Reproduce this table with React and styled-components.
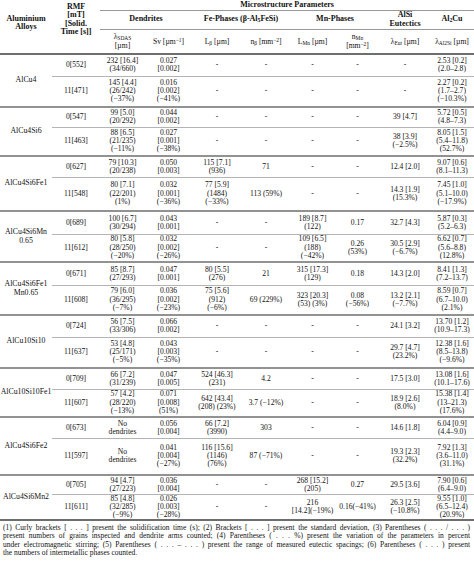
import styled, { createGlobalStyle } from "styled-components";

const GlobalStyle = createGlobalStyle`
  body {
    margin: 0;
    background: #fff;
  }
`;

const Page = styled.div`
  width: 474px;
  font-family: "Liberation Serif", "Times New Roman", serif;
  color: #111;
`;

const Table = styled.table`
  width: 474px;
  table-layout: fixed;
  border-collapse: collapse;
`;

const Tr = styled.tr`
  height: ${(p) => p.$h}px;
`;

const Th = styled.th`
  padding: ${(p) => p.$top || 0}px 0 0 0;
  vertical-align: ${(p) => (p.$top ? "top" : "middle")};
  text-align: center;
  font-size: ${(p) => (p.$bold ? "8px" : "7.6px")};
  font-weight: ${(p) => (p.$bold ? 700 : 400)};
  line-height: ${(p) => (p.$bold ? "8.4px" : "9.4px")};
  white-space: nowrap;
  border-bottom: ${(p) =>
    p.$bottom ? "2px solid #6e6e6e" : p.$rule ? "1px solid #999" : "none"};
`;

const lines = {
  inner: "1px solid #b4b4b4",
  group: "2px solid #929292",
  end: "2px solid #6e6e6e",
};

const Td = styled.td`
  padding: 0;
  vertical-align: middle;
  text-align: center;
  font-size: 7.6px;
  line-height: 8.2px;
  white-space: pre;
  border-bottom: ${(p) => lines[p.$line] || "none"};
`;

const AlloyCell = styled(Td)`
  font-size: 7.8px;
  line-height: 8.8px;
`;

const Sub = styled.sub`
  font-size: 72%;
  line-height: 0;
  vertical-align: -0.25em;
`;

const Sup = styled.sup`
  font-size: 72%;
  line-height: 0;
  vertical-align: 0.4em;
`;

const Caption = styled.div`
  padding: 3px 4px 0 3px;
  font-size: 7.5px;
  line-height: 8.3px;
`;

const CapLine = styled.div`
  text-align: justify;
  text-align-last: ${(p) => (p.$last ? "left" : "justify")};
  white-space: nowrap;
`;

const cols = [52, 48, 45, 47, 50, 48, 45, 45, 50, 44];

const groups = [
  {
    alloy: "AlCu4",
    rows: [
      { h: 22, rmf: "0[552]", c: ["232 [16.4]\n(34/660)", "0.027\n[0.002]", "-", "-", "-", "-", "-", "2.53 [0.2]\n(2.0–2.8)"] },
      { h: 31, rmf: "11[471]", c: ["145 [4.4]\n(26/242)\n(−37%)", "0.016\n[0.002]\n(−41%)", "-", "-", "-", "-", "-", "2.27 [0.2]\n(1.7–2.7)\n(−10.3%)"] },
    ],
  },
  {
    alloy: "AlCu4Si6",
    rows: [
      { h: 20, rmf: "0[547]", c: ["99 [5.0]\n(20/292)", "0.044\n[0.002]", "-", "-", "-", "-", "39 [4.7]", "5.72 [0.5]\n(4.8–7.3)"] },
      { h: 29, rmf: "11[463]", c: ["88 [6.5]\n(21/235)\n(−11%)", "0.027\n[0.001]\n(−38%)", "-", "-", "-", "-", "38 [3.9]\n(−2.5%)", "8.05 [1.5]\n(5.4–11.8)\n(52.7%)"] },
    ],
  },
  {
    alloy: "AlCu4Si6Fe1",
    rows: [
      { h: 21, rmf: "0[627]", c: ["79 [10.3]\n(20/238)", "0.050\n[0.003]", "115 [7.1]\n(936)", "71", "-", "-", "12.4 [2.0]", "9.07 [0.6]\n(8.1–11.3)"] },
      { h: 34, rmf: "11[548]", c: ["80 [7.1]\n(22/201)\n(1%)", "0.032\n[0.001]\n(−36%)", "77 [5.9]\n(1484)\n(−33%)", "113 (59%)", "-", "-", "14.3 [1.9]\n(15.3%)", "7.45 [1.0]\n(5.1–10.0)\n(−17.9%)"] },
    ],
  },
  {
    alloy: "AlCu4Si6Mn\n0.65",
    rows: [
      { h: 23, rmf: "0[689]", c: ["100 [6.7]\n(30/294)", "0.043\n[0.001]", "-", "-", "189 [8.7]\n(122)", "0.17", "32.7 [4.3]", "5.87 [0.3]\n(5.2–6.3)"] },
      { h: 28, rmf: "11[612]", c: ["80 [5.8]\n(28/250)\n(−20%)", "0.032\n[0.002]\n(−26%)", "-", "-", "109 [6.5]\n(188)\n(−42%)", "0.26\n(53%)", "30.5 [2.9]\n(−6.7%)", "6.62 [0.7]\n(5.6–8.8)\n(12.8%)"] },
    ],
  },
  {
    alloy: "AlCu4Si6Fe1\nMn0.65",
    rows: [
      { h: 23, rmf: "0[671]", c: ["85 [8.7]\n(27/293)", "0.047\n[0.001]", "80 [5.5]\n(276)", "21", "315 [17.3]\n(129)", "0.18", "14.3 [2.0]", "8.41 [1.3]\n(7.2–13.7)"] },
      { h: 30, rmf: "11[608]", c: ["79 [6.0]\n(36/295)\n(−7%)", "0.036\n[0.002]\n(−23%)", "75 [5.6]\n(912)\n(−6%)", "69 (229%)", "323 [20.3]\n(53) (3%)", "0.08\n(−56%)", "13.2 [2.1]\n(−7.7%)", "8.59 [0.7]\n(6.7–10.0)\n(2.1%)"] },
    ],
  },
  {
    alloy: "AlCu10Si10",
    rows: [
      { h: 22, rmf: "0[724]", c: ["56 [7.5]\n(33/306)", "0.066\n[0.002]", "-", "-", "-", "-", "24.1 [3.2]", "13.70 [1.2]\n(10.9–17.3)"] },
      { h: 31, rmf: "11[637]", c: ["53 [4.8]\n(25/171)\n(−5%)", "0.043\n[0.003]\n(−35%)", "-", "-", "-", "-", "29.7 [4.7]\n(23.2%)", "12.38 [1.6]\n(8.5–13.8)\n(−9.6%)"] },
    ],
  },
  {
    alloy: "AlCu10Si10Fe1",
    rows: [
      { h: 21, rmf: "0[709]", c: ["66 [7.2]\n(31/239)", "0.047\n[0.005]", "524 [46.3]\n(231)", "4.2", "-", "-", "17.5 [3.0]", "13.08 [1.6]\n(10.1–17.6)"] },
      { h: 28, rmf: "11[607]", c: ["57 [4.2]\n(28/220)\n(−13%)", "0.071\n[0.008]\n(51%)", "642 [43.4]\n(208) (23%)", "3.7 (−12%)", "-", "-", "18.9 [2.6]\n(8.0%)", "15.38 [1.4]\n(13–21.3)\n(17.6%)"] },
    ],
  },
  {
    alloy: "AlCu4Si6Fe2",
    rows: [
      { h: 21, rmf: "0[673]", c: ["No\ndendrites", "0.056\n[0.004]", "66 [7.2]\n(3990)", "303", "-", "-", "14.6 [1.8]", "6.04 [0.9]\n(4.4–9.0)"] },
      { h: 37, rmf: "11[597]", c: ["No\ndendrites", "0.041\n[0.004]\n(−27%)", "116 [15.6]\n(1146)\n(76%)", "87 (−71%)", "-", "-", "19.3 [2.3]\n(32.2%)", "7.92 [1.3]\n(3.6–11.0)\n(31.1%)"] },
    ],
  },
  {
    alloy: "AlCu4Si6Mn2",
    rows: [
      { h: 19, rmf: "0[705]", c: ["94 [4.7]\n(27/223)", "0.036\n[0.004]", "-", "-", "268 [15.2]\n(205)", "0.27", "29.5 [3.6]", "7.90 [0.6]\n(6.4–9.0)"] },
      { h: 26, rmf: "11[611]", c: ["85 [4.8]\n(32/285)\n(−9%)", "0.026\n[0.003]\n(−28%)", "-", "-", "216\n[14.2](−19%)", "0.16(−41%)", "26.3 [2.5]\n(−10.8%)", "9.55 [1.0]\n(6.5–12.4)\n(20.9%)"] },
    ],
  },
];

const caption = [
  "(1) Curly brackets [ . . . ] present the solidification time (s); (2) Brackets [ . . . ] present the standard deviation, (3) Parentheses ( . . . / . . . )",
  "present numbers of grains inspected and dendrite arms counted; (4) Parentheses ( . . . %) present the variation of the parameters in percent",
  "under electromagnetic stirring; (5) Parentheses ( . . . – . . . ) present the range of measured eutectic spacings; (6) Parentheses ( . . . ) present",
  "the numbers of intermetallic phases counted.",
];

const App = () => {
  return (
    <Page>
      <GlobalStyle />
      <Table>
        <colgroup>
          {cols.map((w, i) => (
            <col key={i} style={{ width: w }} />
          ))}
        </colgroup>
        <thead>
          <Tr $h={10}>
            <Th rowSpan={3} $bold $top={15} $bottom>
              Aluminium
              <br />
              Alloys
            </Th>
            <Th rowSpan={3} $bold $top={3} $bottom>
              RMF
              <br />
              [mT]
              <br />
              [Solid.
              <br />
              Time [s]]
            </Th>
            <Th colSpan={8} $bold $rule>
              Microstructure Parameters
            </Th>
          </Tr>
          <Tr $h={19}>
            <Th colSpan={2} $bold $rule>Dendrites</Th>
            <Th colSpan={2} $bold $rule>
              Fe-Phases (β-Al<Sub>5</Sub>FeSi)
            </Th>
            <Th colSpan={2} $bold $rule>Mn-Phases</Th>
            <Th $bold $rule>
              AlSi
              <br />
              Eutectics
            </Th>
            <Th $bold $rule>
              Al<Sub>2</Sub>Cu
            </Th>
          </Tr>
          <Tr $h={25}>
            <Th $bottom>
              λ<Sub>SDAS</Sub>
              <br />
              [µm]
            </Th>
            <Th $bottom>
              Sv [µm<Sup>−1</Sup>]
            </Th>
            <Th $bottom>
              L<Sub>β</Sub> [µm]
            </Th>
            <Th $bottom>
              n<Sub>β</Sub> [mm<Sup>−2</Sup>]
            </Th>
            <Th $bottom>
              L<Sub>Mn</Sub> [µm]
            </Th>
            <Th $bottom>
              n<Sub>Mn</Sub>
              <br />
              [mm<Sup>−2</Sup>]
            </Th>
            <Th $bottom>
              λ<Sub>Eut</Sub> [µm]
            </Th>
            <Th $bottom>
              λ<Sub>Al2Si</Sub> [µm]
            </Th>
          </Tr>
        </thead>
        <tbody>
          {groups.map((g, gi) => {
            const end = gi === groups.length - 1 ? "end" : "group";
            return g.rows.map((r, ri) => (
              <Tr key={gi + "-" + ri} $h={r.h}>
                {ri === 0 && (
                  <AlloyCell rowSpan={2} $line={end}>
                    {g.alloy}
                  </AlloyCell>
                )}
                <Td $line={ri === 0 ? "inner" : end}>{r.rmf}</Td>
                {r.c.map((v, ci) => (
                  <Td key={ci} $line={ri === 0 ? "inner" : end}>
                    {v}
                  </Td>
                ))}
              </Tr>
            ));
          })}
        </tbody>
      </Table>
      <Caption>
        {caption.map((t, i) => (
          <CapLine key={i} $last={i === caption.length - 1}>
            {t}
          </CapLine>
        ))}
      </Caption>
    </Page>
  );
};

export default App;
